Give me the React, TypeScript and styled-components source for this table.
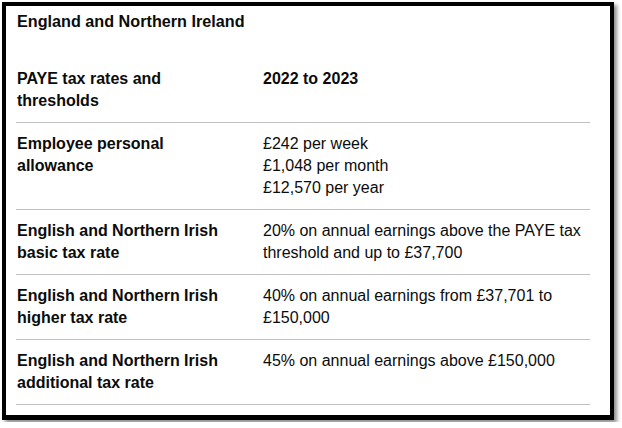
import React from "react";
import styled, { createGlobalStyle } from "styled-components";

const Global = createGlobalStyle`
  html, body { margin: 0; padding: 0; background: #ffffff; }
  body { padding: 2px; font-family: "Liberation Sans", Arial, sans-serif; color: #0b0c0c; }
`;

const Frame = styled.div`
  box-sizing: border-box;
  width: 612px;
  border: 4px solid #000000;
  border-bottom-width: 5px;
  box-shadow: 3px 3px 4px rgba(0, 0, 0, 0.45);
  padding: 4px 20px 10px 10px;
  background: #ffffff;
`;

const Table = styled.table`
  width: 100%;
  border-collapse: collapse;
  border-spacing: 0;
  table-layout: fixed;
  font-size: 16px;
  line-height: 22px;
`;

const Caption = styled.caption`
  text-align: left;
  font-weight: 700;
  font-size: 16.2px;
  line-height: 22px;
  padding: 0 0 0 1px;
  margin-bottom: 26px;
`;

const Cell = styled.td<{ $head?: boolean; $first?: boolean }>`
  box-sizing: border-box;
  padding: 10px ${(p) => (p.$first ? "20px" : "0")} 10px
    ${(p) => (p.$first ? "1px" : "0")};
  width: ${(p) => (p.$first ? "247px" : "auto")};
  text-align: left;
  vertical-align: top;
  font-weight: ${(p) => (p.$head || p.$first ? 700 : 400)};
  border-bottom: 1px solid #bfc1c3;
`;

const Line = styled.span`
  display: block;
`;

const rows: { label: string; values: string[] }[] = [
  {
    label: "Employee personal allowance",
    values: ["£242 per week", "£1,048 per month", "£12,570 per year"],
  },
  {
    label: "English and Northern Irish basic tax rate",
    values: ["20% on annual earnings above the PAYE tax threshold and up to £37,700"],
  },
  {
    label: "English and Northern Irish higher tax rate",
    values: ["40% on annual earnings from £37,701 to £150,000"],
  },
  {
    label: "English and Northern Irish additional tax rate",
    values: ["45% on annual earnings above £150,000"],
  },
];

export default function App() {
  return (
    <>
      <Global />
      <Frame>
        <Table>
          <Caption>England and Northern Ireland</Caption>
          <thead>
            <tr>
              <Cell as="th" $head $first>
                PAYE tax rates and thresholds
              </Cell>
              <Cell as="th" $head>
                2022 to 2023
              </Cell>
            </tr>
          </thead>
          <tbody>
            {rows.map((r) => (
              <tr key={r.label}>
                <Cell as="th" $first>
                  {r.label}
                </Cell>
                <Cell>
                  {r.values.map((v) => (
                    <Line key={v}>{v}</Line>
                  ))}
                </Cell>
              </tr>
            ))}
          </tbody>
        </Table>
      </Frame>
    </>
  );
}
